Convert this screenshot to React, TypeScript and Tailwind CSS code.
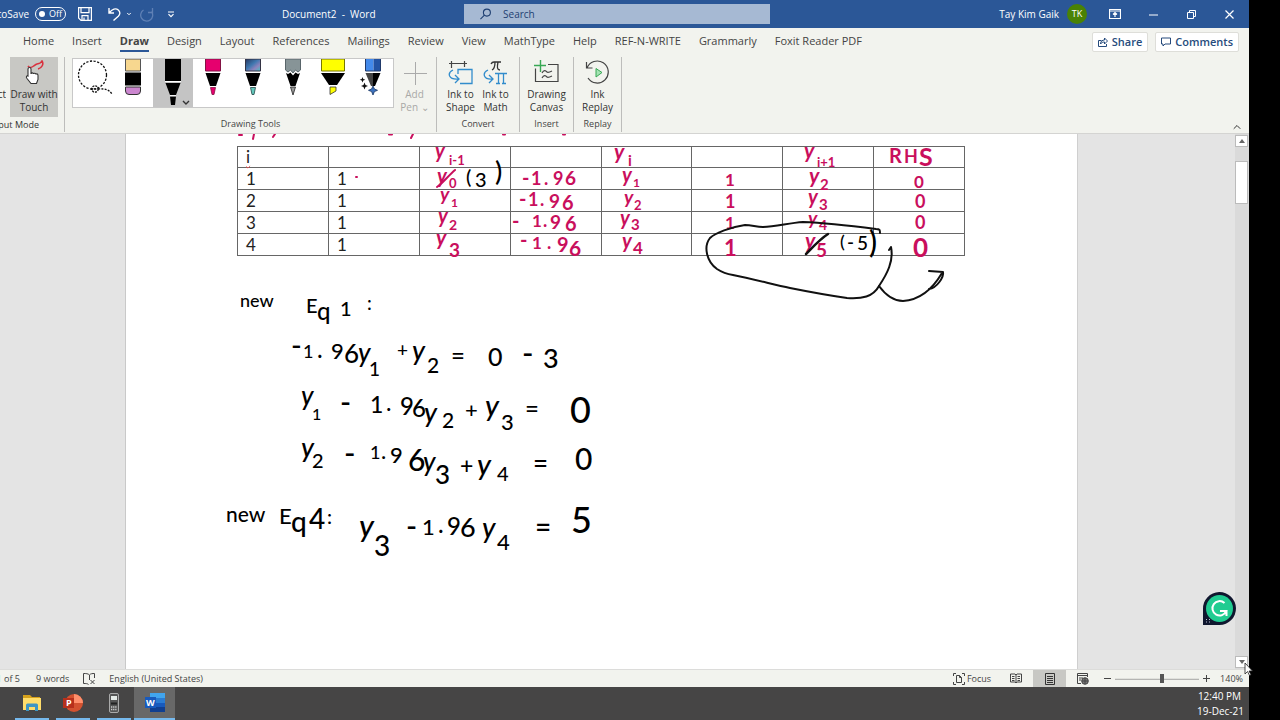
import type { ReactNode } from 'react';
import { ChevronDown, ChevronUp } from 'lucide-react';

type Stroke = [x: number, y: number, text: string, size: number];

const tabs = [
  'Home',
  'Insert',
  'Draw',
  'Design',
  'Layout',
  'References',
  'Mailings',
  'Review',
  'View',
  'MathType',
  'Help',
  'REF-N-WRITE',
  'Grammarly',
  'Foxit Reader PDF',
];

const rows = [
  ['i', ''],
  ['1', '1'],
  ['2', '1'],
  ['3', '1'],
  ['4', '1'],
];

// Pink ink written over the table
const pinkInk: Stroke[] = [
  [435, 158, 'y', 20], [449, 165, 'i-1', 13],
  [437, 183, 'y', 20], [449, 188, '0', 13],
  [440, 201, 'y', 19], [451, 207, '1', 12],
  [438, 223, 'y', 20], [449, 230, '2', 14],
  [436, 245, 'y', 21], [449, 257, '3', 19],
  [522, 185, '-', 20], [531, 185, '1', 18], [544, 185, '.', 18], [553, 185, '9', 18], [565, 185, '6', 19],
  [519, 206, '-', 20], [528, 206, '1', 18], [540, 206, '.', 18], [549, 208, '9', 19], [562, 210, '6', 20],
  [512, 228, '-', 20], [532, 227, '1', 17], [543, 227, '.', 18], [550, 229, '9', 19], [565, 231, '6', 20],
  [520, 247, '-', 20], [532, 249, '1', 17], [547, 249, '.', 18], [557, 252, '9', 20], [569, 256, '6', 21],
  [614, 159, 'y', 21], [628, 166, 'i', 15],
  [622, 182, 'y', 20], [633, 187, '1', 12],
  [624, 204, 'y', 19], [634, 210, '2', 13],
  [620, 225, 'y', 20], [631, 230, '3', 15],
  [622, 248, 'y', 20], [633, 254, '4', 17],
  [725, 186, '1', 17], [725, 208, '1', 18], [725, 229, '1', 17], [724, 256, '1', 22],
  [804, 158, 'y', 21], [817, 167, 'i+1', 13],
  [809, 183, 'y', 21], [820, 190, '2', 15],
  [808, 204, 'y', 20], [819, 210, '3', 15],
  [808, 225, 'y', 19], [819, 230, '4', 14],
  [805, 248, 'y', 21], [816, 257, '5', 19],
  [889, 163, 'R', 20], [904, 163, 'H', 18], [919, 166, 'S', 25],
  [914, 188, '0', 17], [915, 208, '0', 18], [915, 229, '0', 18], [913, 257, '0', 26],
];

// Black ink: the corrections in the table and the worked equations
const blackInk: Stroke[] = [
  [466, 184, '(', 20], [475, 187, '3', 20], [495, 181, ')', 27],
  [840, 248, '(', 18], [847, 249, '-', 19], [857, 250, '5', 19], [869, 253, ')', 30],
  [240, 307, 'new', 18], [306, 313, 'E', 20], [317, 320, 'q', 24], [340, 316, '1', 20], [367, 310, ':', 19],
  [291, 356, '-', 29], [303, 358, '1', 18], [317, 358, '.', 24], [331, 359, '9', 22], [344, 363, '6', 26],
  [358, 362, 'y', 26], [369, 376, '1', 19], [397, 357, '+', 19], [412, 360, 'y', 27], [427, 373, '2', 21],
  [451, 364, '=', 24], [488, 366, '0', 25], [522, 364, '-', 31], [543, 368, '3', 27],
  [301, 405, 'y', 26], [312, 420, '1', 16], [340, 413, '-', 30], [370, 413, '1', 23], [386, 411, '.', 23],
  [400, 415, '9', 24], [412, 417, '6', 24], [424, 422, 'y', 27], [442, 428, '2', 21],
  [465, 418, '+', 22], [485, 416, 'y', 29], [501, 430, '3', 22], [525, 417, '=', 24], [570, 423, '0', 36],
  [301, 457, 'y', 27], [312, 468, '2', 20], [344, 464, '-', 31], [370, 459, '1', 18], [381, 459, '.', 22],
  [390, 463, '9', 22], [408, 471, '6', 30], [423, 471, 'y', 26], [435, 484, '3', 26],
  [460, 474, '+', 23], [477, 475, 'y', 29], [497, 481, '4', 20], [533, 473, '=', 26], [575, 470, '0', 30],
  [226, 522, 'new', 21], [279, 524, 'E', 22], [291, 532, 'q', 28], [309, 529, '4', 28], [327, 524, ':', 20],
  [359, 537, 'y', 31], [374, 556, '3', 28], [406, 537, '-', 30], [422, 535, '1', 22], [438, 533, '.', 24],
  [447, 535, '9', 24], [460, 537, '6', 27], [482, 538, 'y', 28], [497, 550, '4', 22],
  [535, 537, '=', 28], [571, 533, '5', 36],
];

const penShapes: { name: string; art: ReactNode }[] = [
  {
    name: 'Lasso',
    art: (
      <g fill="none" stroke="#111" strokeWidth="1.3">
        <circle cx="19.500" cy="16" r="14" strokeDasharray="2.2 1.5" />
        <circle cx="22" cy="30" r="3.200" strokeDasharray="2 1" />
        <path d="M18 30h8M25 30c7-.5 11 .5 14 5" strokeDasharray="2 1.300" />
      </g>
    ),
  },
  {
    name: 'Eraser',
    art: (
      <>
        <path d="M12.500 0h15v12h-15z" fill="#f7d78f" stroke="#555" strokeWidth="1" />
        <path d="M12 13.500h16v13H12z" fill="#000" />
        <path d="M12.500 28h15v4q0 3.500-3.500 3.500h-8q-3.500 0-3.500-3.500z" fill="#cb86cf" stroke="#333" />
      </>
    ),
  },
  {
    name: 'Black pen',
    art: (
      <>
        <path d="M12 0h16v22H12zM12.500 24h15L23 36h-6zM17 37.500h6L22 46h-4z" fill="#000" />
        <path d="M12 22.500h16M17 36.700h6" stroke="#fff" />
        <path d="m30 42 3 3 3-3" fill="none" stroke="#333" strokeWidth="1.400" />
      </>
    ),
  },
  {
    name: 'Pink pen',
    art: (
      <>
        <path d="M12.500 0h15v12h-15z" fill="#e6006e" stroke="#831344" />
        <path d="M12.500 14h15L23 27h-6z" fill="#000" />
        <path d="M17.500 28.500h5L21 35.500h-2z" fill="#e6006e" stroke="#831344" strokeWidth=".8" />
      </>
    ),
  },
  {
    name: 'Galaxy pen',
    art: (
      <>
        <defs>
          <linearGradient id="galaxy" x1="0" y1="0" x2="1" y2="1">
            <stop offset="0" stopColor="#26365f" />
            <stop offset=".45" stopColor="#3f78b0" />
            <stop offset=".7" stopColor="#8e83bd" />
            <stop offset="1" stopColor="#42c2c4" />
          </linearGradient>
        </defs>
        <path d="M12.500 0h15v12h-15z" fill="url(#galaxy)" stroke="#334" />
        <path d="M12.500 14h15L23 27h-6z" fill="#000" />
        <path d="M17.500 28.500h5L21 35.500h-2z" fill="#62c8bc" stroke="#244" strokeWidth=".8" />
      </>
    ),
  },
  {
    name: 'Pencil',
    art: (
      <>
        <path d="M12.500 0h15v11l-2.500 2-2.500-2-2.500 3-2.500-3-2.500 2-2.500-2z" fill="#879497" stroke="#59656a" />
        <path d="m13 14 2 1 2.500-1.500 2.500 3 2.500-3 2.500 1.500 2-1-4.500 13h-5z" fill="#000" />
        <path d="M17.500 28h5L20 36z" fill="#999" stroke="#222" strokeWidth=".8" />
      </>
    ),
  },
  {
    name: 'Highlighter',
    art: (
      <>
        <path d="M8.500 0h23v12h-23z" fill="#ff0" stroke="#777700" />
        <path d="M8 14h24l-8 12h-8z" fill="#000" />
        <path d="M17 28h6v4l-6 3.500z" fill="#ff0" stroke="#333" strokeWidth=".8" />
      </>
    ),
  },
  {
    name: 'Action pen',
    art: (
      <>
        <path d="M12.500 0h8v12h-8z" fill="#4389ea" />
        <path d="M20.500 0h7v12h-7z" fill="#2353a4" />
        <path d="M12.500 0v12h15V0" fill="none" stroke="#213a6a" />
        <path d="M12.500 14H20v13h-2z" fill="#444" />
        <path d="M20 14h7.500L22 27h-2z" fill="#000" />
        <path d="m20 27 1.400 3 3.100 1.300-3.100 1.300L20 36l-1.400-3.400-3.100-1.300 3.100-1.300z" fill="#3c72bf" stroke="#153462" strokeWidth=".8" />
        <path d="m9.500 18 .8 2 2 .8-2 .8-.8 2-.8-2-2-.8 2-.8zM11.500 23.500l1 2.500 2.500 1-2.500 1-1 2.500-1-2.500-2.500-1 2.500-1z" fill="#111" />
      </>
    ),
  },
];

const Ink = ({ strokes }: { strokes: Stroke[] }) => (
  <>
    {strokes.map(([x, y, text, size], i) => (
      <text key={i} x={x} y={y} fontSize={size} fontStyle={text === 'y' ? 'italic' : 'normal'}>
        {text}
      </text>
    ))}
  </>
);

const TitleBar = () => (
  <header className="flex h-7 shrink-0 items-center bg-[#2b5797] text-[10px] text-white">
    <div className="flex flex-1 items-center">
      <div className="flex w-[29px] justify-end overflow-hidden whitespace-nowrap">AutoSave</div>
      <button className="ml-[6px] flex h-[14px] w-[31px] items-center gap-1 rounded-full border border-white pl-[3px] text-[9px]">
        <span className="size-[6px] rounded-full bg-white" />
        Off
      </button>
      <button aria-label="Save" className="ml-3">
        <svg width="14" height="14" viewBox="0 0 14 14" fill="none" stroke="#fff" strokeWidth="1.2">
          <path d="M.6.600h12.800v12.800H3L.600 11zM3 .600v5h8v-5M4 13.400V8.600h6v4.800M6 13v-2.500" />
        </svg>
      </button>
      <button aria-label="Undo" className="ml-4">
        <svg width="13" height="14" viewBox="0 0 13 14" fill="none" stroke="#fff" strokeWidth="1.400">
          <path d="M1 1v5h5M1.300 5.800C4 1.700 8 1 10.300 3c2.300 2.200 1.800 4.500 0 6.300L5.500 13.500" />
        </svg>
      </button>
      <button aria-label="Undo list" className="ml-[5px]">
        <ChevronDown size={6} strokeWidth={4} />
      </button>
      <button aria-label="Redo" className="ml-2 text-[#5f80b5]">
        <svg width="14" height="15" viewBox="0 0 14 15" fill="none" stroke="currentColor" strokeWidth="1.3">
          <path d="M12.500 1v4.500H8M3.500 3A6 6 0 1 0 11.500 4.500" />
        </svg>
      </button>
      <button aria-label="Customize" className="ml-[13px]">
        <svg width="8" height="7" viewBox="0 0 8 7" fill="none" stroke="#fff" strokeWidth="1.200">
          <path d="M1 1h6M1.500 3.200 4 5.700l2.500-2.500" />
        </svg>
      </button>
      <h1 className="ml-[107px] whitespace-pre">Document2  -  Word</h1>
    </div>
    <label className="flex h-5 w-[306px] items-center bg-[#a6b9d3] pl-4 text-[#1e3f72]">
      <svg width="12" height="12" viewBox="0 0 12 12" fill="none" stroke="currentColor" strokeWidth="1.200">
        <circle cx="7.500" cy="4.500" r="3.800" />
        <path d="M4.800 7.200.500 11.500" />
      </svg>
      <input
        aria-label="Search"
        placeholder="Search"
        className="ml-3 w-full bg-transparent outline-none placeholder:text-[#1e3f72]"
      />
    </label>
    <div className="flex flex-1 items-center justify-end pr-[15px]">
      <span>Tay Kim Gaik</span>
      <span className="ml-2 flex size-5 items-center justify-center rounded-full bg-[#498205] text-[9px]">TK</span>
      <button aria-label="Ribbon display options" className="ml-[22px]">
        <svg width="12" height="10" viewBox="0 0 12 10" fill="none" stroke="#fff">
          <path d="M.5.500h11v9H.5zM.5 2h11M6 8V4M4 5.500l2-2 2 2" strokeWidth="1.200" />
        </svg>
      </button>
      <button aria-label="Minimize" className="ml-7">
        <svg width="9" height="9" viewBox="0 0 9 9" stroke="#fff">
          <path d="M0 5h9" />
        </svg>
      </button>
      <button aria-label="Restore" className="ml-[29px]">
        <svg width="9" height="9" viewBox="0 0 9 9" fill="none" stroke="#fff">
          <path d="M.5 2.500h6v6h-6zM2.500 2.500v-2h6v6h-2" />
        </svg>
      </button>
      <button aria-label="Close" className="ml-[29px]">
        <svg width="9" height="9" viewBox="0 0 9 9" stroke="#fff" strokeWidth="1.200">
          <path d="m.5.500 8 8M8.500.500l-8 8" />
        </svg>
      </button>
    </div>
  </header>
);

const RibbonGroup = ({ label, className, children }: { label: string; className: string; children: ReactNode }) => (
  <section className={`flex flex-col border-r border-[#bdbdbb] ${className}`}>
    <div className="flex h-[62px] justify-center">{children}</div>
    <div className="flex justify-center text-[9px] leading-4 whitespace-nowrap text-[#444]">{label}</div>
  </section>
);

const BigButton = ({ icon, lines, className = '' }: { icon: ReactNode; lines: string[]; className?: string }) => (
  <button className={`flex flex-col items-center text-[10px] leading-[13px] whitespace-nowrap ${className}`}>
    <span className="flex h-[31px] items-center">{icon}</span>
    {lines.map((line) => (
      <span key={line}>{line}</span>
    ))}
  </button>
);

const Ribbon = () => (
  <div className="shrink-0 border-b border-[#d4d4d2] bg-[#f2f3ee] text-[#333]">
    <div className="flex h-7 items-center pr-[10px] pl-[23px] text-[#444]">
      <nav className="flex gap-[18px] text-[11px] leading-[18px] whitespace-nowrap">
        {tabs.map((tab) => (
          <button
            key={tab}
            className={tab === 'Draw' ? 'border-b-2 border-[#2b5797] font-bold' : 'border-b-2 border-transparent'}
          >
            {tab}
          </button>
        ))}
      </nav>
      <div className="ml-auto flex gap-[7px] text-[11px] font-semibold text-[#264b7c]">
        <button className="flex h-5 items-center gap-1 rounded-xs border border-[#deded9] bg-white px-[5px]">
          <svg width="10" height="10" viewBox="0 0 10 10" fill="none" stroke="currentColor">
            <path d="M3.500 3.500h-3v6h8V7M2.500 7c0-3 2-4 4-4V1l3 3-3 3V5c-2 0-3 .5-4 2z" />
          </svg>
          Share
        </button>
        <button className="flex h-5 items-center gap-1 rounded-xs border border-[#deded9] bg-white px-[5px]">
          <svg width="10" height="10" viewBox="0 0 10 10" fill="none" stroke="currentColor">
            <path d="M.5 1h9v6H4L2 9V7H.5z" />
          </svg>
          Comments
        </button>
      </div>
    </div>
    <div className="flex h-[77px]">
      <div className="my-px flex">
        <section className="flex w-[65px] flex-col border-r border-[#bdbdbb]">
          <div className="flex h-[62px] justify-end pr-[6px]">
            <div className="flex w-[6px] justify-end overflow-hidden pt-[31px] text-[10px] leading-[13px]">Select</div>
            <BigButton
              className="ml-1 w-12 bg-[#c8c8c4]"
              lines={['Draw with', 'Touch']}
              icon={
                <svg width="22" height="25" viewBox="0 0 22 25" fill="none">
                  <path d="M5 6c3 4 6-1 9-2 3-.5 4-1 5-3 2 3 0 7-4 8" stroke="#d9323f" strokeWidth="1.600" />
                  <path
                    d="M5 16V9c0-2 3-2 3 0v5c0-1.500 2.500-1.500 2.500 0 0-1 2.500-1 2.500.5 0-1 2-1 2 1v4l-1.500 4H8l-4-5c-1.500-2 0-3 1-2.500z"
                    fill="#fff"
                    stroke="#333"
                    strokeWidth="1.100"
                  />
                </svg>
              }
            />
          </div>
          <div className="flex w-[39px] justify-end overflow-hidden text-[9px] leading-4 whitespace-nowrap">Input Mode</div>
        </section>
        <RibbonGroup label="Drawing Tools" className="w-[372px]">
          <div className="mt-px flex h-[50px] border border-[#c8c8c8] bg-white">
            {penShapes.map(({ name, art }) => (
              <button key={name} aria-label={name} className={name === 'Black pen' ? 'bg-[#c4c4c4]' : ''}>
                <svg width="40" height="48" viewBox="0 0 40 48">
                  {art}
                </svg>
              </button>
            ))}
          </div>
          <BigButton
            className="ml-[6px] text-[#a9a9a7]"
            lines={['Add', 'Pen ⌄']}
            icon={
              <svg width="24" height="24" viewBox="0 0 24 24" stroke="#aaa">
                <path d="M12.500 1v23M1 12.500h23" />
              </svg>
            }
          />
        </RibbonGroup>
        <RibbonGroup label="Convert" className="w-[83px]">
          <BigButton
            className="w-[35px]"
            lines={['Ink to', 'Shape']}
            icon={
              <svg width="25" height="25" viewBox="0 0 25 25" fill="none">
                <path d="M1 3.500h18M3.500 1v7M16.500 1v6" stroke="#444" strokeWidth="1.200" />
                <path d="M10 14V9.500h14v14H12M5 10c-6 3-5 10 6 9M7 15l4 4-4 4" stroke="#318ccc" strokeWidth="1.300" />
              </svg>
            }
          />
          <BigButton
            className="w-[35px]"
            lines={['Ink to', 'Math']}
            icon={
              <svg width="25" height="25" viewBox="0 0 25 25" fill="none">
                <path d="M8 4c1-2 2-2 3-2h7M12 2c0 4-1 7-3 8M15 2c-1 5-1 8 2 8" stroke="#333" strokeWidth="1.300" />
                <path
                  d="M5 10c-6 3-5 10 5 9M6 15l4 4-4 4M12 13.500h12M15.500 14v9M20.500 14v9M13 23.500h4M19 23.500h4"
                  stroke="#318ccc"
                  strokeWidth="1.300"
                />
              </svg>
            }
          />
        </RibbonGroup>
        <RibbonGroup label="Insert" className="w-[54px]">
          <BigButton
            lines={['Drawing', 'Canvas']}
            icon={
              <svg width="25" height="25" viewBox="0 0 25 25" fill="none">
                <path d="M14 4.500h10v17H1.500v-13M8 13c2-4 4-2 5-1s3 0 5-1M8 18c2-4 4-2 5-1s3 0 5-1" stroke="#444" strokeWidth="1.200" />
                <path d="M6.500 0v12M0 5.500h12" stroke="#38a854" strokeWidth="1.400" />
              </svg>
            }
          />
        </RibbonGroup>
        <RibbonGroup label="Replay" className="w-[48px]">
          <BigButton
            lines={['Ink', 'Replay']}
            icon={
              <svg width="25" height="25" viewBox="0 0 25 25" fill="none">
                <path d="M1.500 2v6h6M2 8A11 11 0 1 1 3 18" stroke="#444" strokeWidth="1.200" />
                <path d="m11 8.500 6 4-6 4.500z" fill="#a5e3b4" stroke="#38a854" />
              </svg>
            }
          />
        </RibbonGroup>
      </div>
      <button aria-label="Collapse the ribbon" className="mt-auto mr-[6px] ml-auto">
        <ChevronUp size={12} />
      </button>
    </div>
  </div>
);

const InkLayer = () => (
  <svg
    className="absolute top-0 left-0 font-[Lato,sans-serif]"
    width="951"
    height="535"
    viewBox="126 134 951 535"
    fill="none"
    strokeLinecap="round"
    strokeLinejoin="round"
  >
    <g fill="#c90f5d" className="font-bold">
      <Ink strokes={pinkInk} />
    </g>
    <g fill="#000" className="font-medium">
      <Ink strokes={blackInk} />
    </g>
    {/* lower ends of a line of ink that is scrolled out of view */}
    <path
      d="M239 135h3M254 134l-1 5M275 134l-2 3M389 134.500h3M413 134l-2 4M503 134.500h2M563 134.500h2M356 177h1M437 187c6-4 12-12 18-17"
      stroke="#c90f5d"
      strokeWidth="2"
    />
    <g stroke="#111" strokeWidth="2">
      <path d="M806 254c6-6 14-15 22-20" strokeWidth="2.500" />
      <path d="M880 233c0-3 0-4-4-4-24-3-50-6-73-7-15 1-27 5-40 5-7 0-11-2-18-2-14 2-30 8-35 13-7 9-3 24 7 31 6 4 9 5 16 6 19 4 39 9 57 13 20 4 36 7 57 10 15 1 26-1 32-12 8-12 15-25 12-39l-2 3" />
      <path d="M879 286c8 11 16 15 24 15 16-1 29-11 39-28M929 271l14 1c1 5-6 16-14 17" />
    </g>
  </svg>
);

const DocumentArea = () => (
  <main className="flex min-h-0 flex-1 bg-[#e4e4e4]">
    <div className="w-[126px] shrink-0 border-r border-[#c9c9c9]" />
    <article className="relative min-w-0 flex-1 overflow-hidden bg-white pt-3 pr-[112px] pl-[111px] font-[Lato,sans-serif]">
      <table className="w-full table-fixed border-collapse text-[17px] leading-5 text-[#222]">
        <tbody>
          {rows.map((cells, row) => (
            <tr key={cells[0]} className={row === 0 ? 'h-[21px]' : 'h-[22px]'}>
              {[...cells, '', '', '', '', '', ''].map((cell, i) => (
                <td key={i} className="border border-[#666] px-2 py-0">
                  {cell === 'i' ? (
                    <span className="underline decoration-[#e04a4a] decoration-wavy decoration-1">i</span>
                  ) : (
                    cell
                  )}
                </td>
              ))}
            </tr>
          ))}
        </tbody>
      </table>
      <InkLayer />
    </article>
    <div className="relative w-[158px] shrink-0 border-l border-[#cfcfcf]">
      <button aria-label="Grammarly" className="absolute right-[-2px] bottom-[42px]">
        <svg width="36" height="36" viewBox="0 0 36 36">
          <path d="M2 34V18A16.500 16.500 0 1 1 18.500 34z" fill="#10172f" />
          <circle cx="18.500" cy="17.500" r="13.500" fill="#20cc91" />
          <path d="M23.500 12a7.200 7.200 0 1 0 1.800 8H19M25.500 20v5" fill="none" stroke="#fff" strokeWidth="2" />
          <path d="M5 28.500h1M8 28.500h1M5 31h1M8 31h1" stroke="#b9bed0" />
        </svg>
      </button>
    </div>
    <div className="flex w-[14px] shrink-0 flex-col bg-[#dadada] pt-px pr-px">
      <button aria-label="Scroll up" className="flex h-3 items-center justify-center border border-[#bbb] bg-white">
        <svg width="6" height="4" viewBox="0 0 6 4" fill="#666">
          <path d="M0 4h6L3 0z" />
        </svg>
      </button>
      <div className="mt-[14px] h-[43px] border border-[#bbb] bg-white" />
      <button aria-label="Scroll down" className="mt-auto mb-px flex h-3 items-center justify-center border border-[#bbb] bg-white">
        <svg width="6" height="4" viewBox="0 0 6 4" fill="#666">
          <path d="M0 0h6L3 4z" />
        </svg>
      </button>
    </div>
  </main>
);

const StatusBar = () => (
  <div className="flex h-[18px] shrink-0 items-center border-t border-[#dcdcda] bg-[#f2f3ee] text-[9px] text-[#444]">
    <span className="flex w-5 justify-end overflow-hidden whitespace-nowrap">Page 1 of 5</span>
    <span className="ml-4">9 words</span>
    <svg className="ml-[14px]" width="13" height="12" viewBox="0 0 13 12" fill="none" stroke="#444">
      <path d="M6.500 2C5 .5 3 .5.500.500v10c2.500 0 4 0 5 1M6.500 2c1-1.500 3-1.500 5-1.500V5M6.500 2v5M7.500 7l4 4M11.500 7l-4 4" />
    </svg>
    <span className="ml-[13px]">English (United States)</span>
    <div className="ml-auto flex items-center pr-[6px]">
      <button className="flex items-center gap-[2px]">
        <svg width="12" height="12" viewBox="0 0 12 12" fill="none" stroke="#444">
          <path d="M.5 3V.500H3M9 .500h2.500V3M.5 9v2.500H3M9 11.500h2.500V9M3.500 2.500h3l2 2v5h-5zM6.500 2.500v2h2" />
        </svg>
        Focus
      </button>
      <button aria-label="Read mode" className="ml-[18px] flex w-[14px] justify-center">
        <svg width="12" height="11" viewBox="0 0 12 11" fill="none" stroke="#444">
          <path d="M.5 1H5l1 1 1-1h4.500v8H7l-1 1-1-1H.500zM6 2v8M2 3.500h2.500M2 5.500h2.500M2 7.500h2.500M7.500 3.500H10M7.500 5.500H10M7.500 7.500H10" />
        </svg>
      </button>
      <button aria-label="Print layout" className="ml-[10px] flex h-[17px] w-[33px] items-center justify-center bg-[#c8c8c4]">
        <svg width="10" height="12" viewBox="0 0 10 12" fill="none" stroke="#333">
          <path d="M.5.500h9v11h-9zM2 3.500h6M2 5.500h6M2 7.500h6M2 9.500h6" />
        </svg>
      </button>
      <button aria-label="Web layout" className="ml-[11px]">
        <svg width="12" height="12" viewBox="0 0 12 12" fill="none" stroke="#444">
          <path d="M4 10.500H.500V.500h10V4M.5 2.500h10M2 5h4M2 7h2" />
          <circle cx="8" cy="8" r="3.300" fill="#777" />
          <path d="M5 8h6M8 5v6" />
        </svg>
      </button>
      <button aria-label="Zoom out" className="ml-[15px]">
        <svg width="7" height="7" viewBox="0 0 7 7" stroke="#444">
          <path d="M0 3.500h7" />
        </svg>
      </button>
      <input
        type="range"
        aria-label="Zoom"
        min="0"
        max="100"
        defaultValue="56"
        className="mx-1 h-3 w-[84px] appearance-none bg-linear-to-b from-transparent from-45% via-[#888] via-50% to-transparent to-60% [&::-webkit-slider-thumb]:h-[9px] [&::-webkit-slider-thumb]:w-1 [&::-webkit-slider-thumb]:appearance-none [&::-webkit-slider-thumb]:bg-[#555]"
      />
      <button aria-label="Zoom in">
        <svg width="7" height="7" viewBox="0 0 7 7" stroke="#444">
          <path d="M0 3.500h7M3.500 0v7" />
        </svg>
      </button>
      <span className="ml-[10px]">140%</span>
    </div>
  </div>
);

const Taskbar = () => (
  <footer className="flex h-[33px] shrink-0 items-center bg-[#464545] pl-[15px] text-white">
    <div className="flex h-full gap-[7px]">
      <button aria-label="File Explorer" className="flex w-[34px] items-center justify-center border-b-2 border-[#76b9ed]">
        <svg width="20" height="18" viewBox="0 0 20 18">
          <path d="M1 1h7l2 2h8v13H1z" fill="#d6a11b" />
          <path d="M1 4h18v12H1z" fill="#ffdd6b" />
          <path d="M4 17v-6q0-1.500 1.500-1.500h9Q16 9.500 16 11v6h-3v-4H7v4z" fill="#3e96c4" />
        </svg>
      </button>
      <button aria-label="PowerPoint" className="flex w-[34px] items-center justify-center border-b-2 border-[#76b9ed]">
        <svg width="20" height="20" viewBox="0 0 20 20">
          <circle cx="11" cy="10" r="9" fill="#d35230" />
          <path d="M11 1a9 9 0 0 1 9 9h-9z" fill="#ff8f6b" />
          <path d="M0 5h11v10H0z" fill="#b7301c" />
          <text x="3" y="13" fontSize="9" fontWeight="700" fill="#fff">P</text>
        </svg>
      </button>
      <button aria-label="Calculator" className="flex w-[34px] items-center justify-center border-b-2 border-[#76b9ed]">
        <svg width="10" height="20" viewBox="0 0 10 20">
          <rect x=".5" y=".5" width="9" height="19" rx="1.500" fill="#555" stroke="#aaa" />
          <path d="M2 3h6v4H2z" fill="#e4e9e6" />
          <path d="M2 10.500h6" stroke="#222" strokeWidth="2" />
          <path d="M2 14h6M2 16.500h6" stroke="#ccc" strokeDasharray="1.300 .8" strokeWidth="1.500" />
        </svg>
      </button>
    </div>
    <button aria-label="Word" className="ml-[3px] flex h-full w-[41px] items-center justify-center border-b-2 border-[#76b9ed] bg-[#686868]">
      <svg width="20" height="19" viewBox="0 0 20 19">
        <path d="M5 0h15v5H5z" fill="#41a5ee" />
        <path d="M5 5h15v5H5z" fill="#2b7cd3" />
        <path d="M5 10h15v4H5z" fill="#185abd" />
        <path d="M5 14h15v5H5z" fill="#103f91" />
        <path d="M0 4h11v11H0z" fill="#185abd" />
        <text x="1" y="13" fontSize="9" fontWeight="700" fill="#fff">W</text>
      </svg>
    </button>
    <div className="ml-auto pr-[5px] text-right text-[10px] leading-[15px]">
      <div className="pr-[3px]">12:40 PM</div>
      <div>19-Dec-21</div>
    </div>
  </footer>
);

const App = () => (
  <div className="relative flex h-screen bg-black font-['Open_Sans',sans-serif]">
    <div className="flex min-w-0 flex-1 flex-col">
      <TitleBar />
      <Ribbon />
      <DocumentArea />
      <StatusBar />
      <Taskbar />
    </div>
    <div className="w-[31px] shrink-0" />
    {/* mouse pointer */}
    <svg className="absolute right-[27px] bottom-[44px]" width="9" height="14" viewBox="0 0 9 14">
      <path d="M1 1v11l2.500-2.500 2 4 1.500-.8-2-3.700H8.500z" fill="#fff" stroke="#222" strokeWidth=".8" />
    </svg>
  </div>
);

export default App;
